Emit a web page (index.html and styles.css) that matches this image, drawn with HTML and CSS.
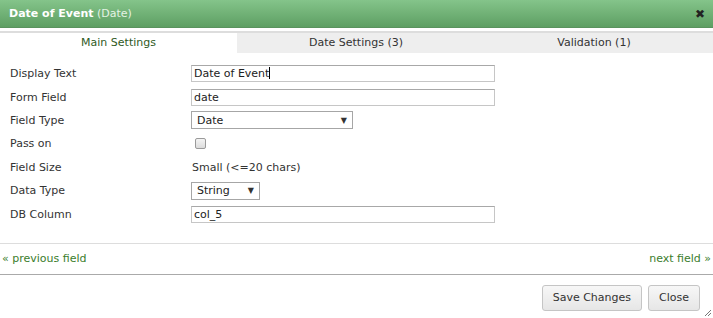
FILE: index.html
```html
<!DOCTYPE html>
<html>
<head>
<meta charset="utf-8">
<link rel="stylesheet" href="styles.css">
</head>
<body>
<div class="dialog">
  <div class="titlebar">
    <span class="title"><b>Date of Event</b> <span class="sub">(Date)</span></span>
    <span class="close">&#x2716;</span>
  </div>
  <div class="tabs">
    <div class="tab active">Main Settings</div>
    <div class="tab">Date Settings (3)</div>
    <div class="tab">Validation (1)</div>
  </div>
  <div class="form">
    <div class="row"><span class="label">Display Text</span><span class="field"><span class="input wide">Date of Event<span class="caret"></span></span></span></div>
    <div class="row"><span class="label">Form Field</span><span class="field"><span class="input wide">date</span></span></div>
    <div class="row"><span class="label">Field Type</span><span class="field"><span class="select type">Date<span class="arrow">&#x25BC;</span></span></span></div>
    <div class="row"><span class="label">Pass on</span><span class="field"><span class="checkbox"></span></span></div>
    <div class="row"><span class="label">Field Size</span><span class="field"><span class="value">Small (&lt;=20 chars)</span></span></div>
    <div class="row"><span class="label">Data Type</span><span class="field"><span class="select dtype">String<span class="arrow">&#x25BC;</span></span></span></div>
    <div class="row"><span class="label">DB Column</span><span class="field"><span class="input wide">col_5</span></span></div>
  </div>
  <div class="nav">
    <a class="link">&laquo; previous field</a>
    <a class="link">next field &raquo;</a>
  </div>
  <div class="buttons">
    <span class="btn">Save Changes</span>
    <span class="btn">Close</span>
  </div>
  <svg class="grip" width="8" height="8" viewBox="0 0 8 8"><path d="M7 1L1 7M7 4L4 7" stroke="#777" stroke-width="1"/></svg>
</div>
</body>
</html>
```
FILE: styles.css
```css
* { box-sizing: border-box; }
html, body { margin: 0; padding: 0; background: #fff; }
body { font-family: "DejaVu Sans", Verdana, sans-serif; font-size: 11px; color: #333; }
.dialog { width: 713px; height: 318px; position: relative; overflow: hidden; }
.titlebar {
  height: 28px;
  background: linear-gradient(#84c48a, #5e9f63);
  display: flex; align-items: center; justify-content: space-between;
  padding: 0 8px 0 9px;
  color: #fff;
  border-bottom: 1px solid #5a935e;
}
.title { font-size: 11px; }
.title b { font-weight: bold; }
.sub { color: #e4f2e4; }
.close { color: #222; font-size: 12px; font-weight: bold; }
.tabs {
  margin-top: 3px;
  border-top: 2px solid #ddd;
  display: grid; grid-template-columns: 237px 238px 238px;
  height: 21px;
}
.tab { background: #eee; text-align: center; line-height: 20px; color: #333; }
.tab.active { background: #fff; color: #2f5a24; }
.form { padding: 10px 0 0 10px; height: 191px; }
.row { display: flex; align-items: center; height: 23.4px; }
.label { width: 181px; }
.field { display: flex; align-items: center; }
.input {
  display: inline-block; height: 17px; line-height: 15px;
  border: 1px solid #c6c6c6; border-top-color: #a8a8a8;
  padding: 0 2px; color: #222;
}
.input.wide { width: 304px; }
.caret { display: inline-block; width: 1px; height: 12px; background: #000; vertical-align: -2px; }
.select {
  display: inline-flex; justify-content: space-between; align-items: center;
  height: 18px; border: 1px solid #a6a6a6; padding: 0 5px 0 5px; color: #222;
  background: #fff;
}
.select.type { width: 162px; }
.select.dtype { width: 69px; }
.arrow { font-size: 8px; color: #333; }
.checkbox {
  display: inline-block; width: 11px; height: 11px; margin-left: 4px;
  border: 1px solid #9a9a9a; border-radius: 2px;
  background: linear-gradient(#f4f4f4, #dcdcdc);
}
.value { padding-left: 1px; color: #333; }
.nav {
  border-top: 1px solid #ddd;
  border-bottom: 1px solid #aaa;
  height: 32px;
  display: flex; justify-content: space-between; align-items: center;
  padding: 0 2px 1px 2px;
}
.link { color: #3b7d2c; text-decoration: none; }
.buttons { display: flex; justify-content: flex-end; gap: 6px; padding: 10px 13px 0 0; }
.btn {
  display: inline-block; height: 26px; line-height: 24px; padding: 0 10px;
  border: 1px solid #c5c5c5; border-radius: 3px;
  background: linear-gradient(#f7f7f7, #e6e6e6);
  color: #333; font-size: 11px;
}
.grip { position: absolute; right: 1px; bottom: 1px; }
```
